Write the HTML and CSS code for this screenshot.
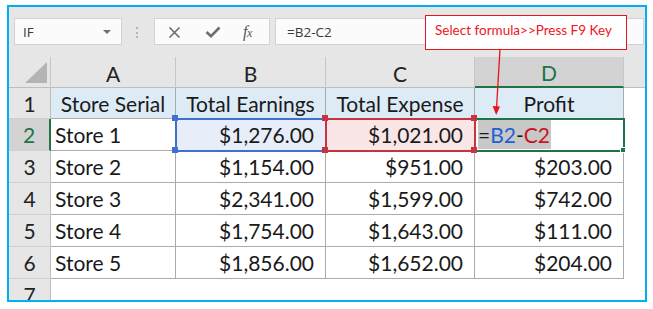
FILE: index.html
```html
<!DOCTYPE html>
<html>
<head>
<meta charset="utf-8">
<link rel="stylesheet" href="styles.css">
</head>
<body>
<div class="frame">
  <div class="toolbar">
    <div class="namebox"><span class="nb-text">IF</span><span class="caret"></span></div>
    <div class="grip"></div>
    <div class="fbtns">
      <svg class="ico-x" width="13" height="11" viewBox="0 0 13 11"><path d="M1.5 0.5 L11.5 10.5 M11.5 0.5 L1.5 10.5" stroke="#6e6e6e" stroke-width="1.6" fill="none"/></svg>
      <svg class="ico-ok" width="16" height="12" viewBox="0 0 16 12"><path d="M1.5 6 L6 10.2 L14.5 1.5" stroke="#6e6e6e" stroke-width="2.6" fill="none"/></svg>
      <span class="fx">f<span class="fx-x">x</span></span>
    </div>
    <div class="finput">=B2-C2</div>
  </div>

  <div class="sheet">
    <div class="ch corner"><span class="tri"></span></div>
    <div class="ch">A</div>
    <div class="ch">B</div>
    <div class="ch">C</div>
    <div class="ch ch-act">D</div>
    <div class="ch ch-ex"></div>

    <div class="rh">1</div>
    <div class="c hd">Store Serial</div>
    <div class="c hd">Total Earnings</div>
    <div class="c hd">Total Expense</div>
    <div class="c hd">Profit</div>
    <div class="ex"></div>

    <div class="rh rh-act">2</div>
    <div class="c txt">Store 1</div>
    <div class="c num ref-b">$1,276.00<span class="h tl"></span><span class="h tr"></span><span class="h bl"></span><span class="h br"></span></div>
    <div class="c num ref-c">$1,021.00<span class="h tl"></span><span class="h tr"></span><span class="h bl"></span><span class="h br"></span></div>
    <div class="c act"><span class="sel">=<span class="fb">B2</span>-<span class="fc">C2</span></span><span class="fill"></span></div>
    <div class="ex"></div>

    <div class="rh">3</div>
    <div class="c txt">Store 2</div>
    <div class="c num">$1,154.00</div>
    <div class="c num">$951.00</div>
    <div class="c num">$203.00</div>
    <div class="ex"></div>

    <div class="rh">4</div>
    <div class="c txt">Store 3</div>
    <div class="c num">$2,341.00</div>
    <div class="c num">$1,599.00</div>
    <div class="c num">$742.00</div>
    <div class="ex"></div>

    <div class="rh">5</div>
    <div class="c txt">Store 4</div>
    <div class="c num">$1,754.00</div>
    <div class="c num">$1,643.00</div>
    <div class="c num">$111.00</div>
    <div class="ex"></div>

    <div class="rh">6</div>
    <div class="c txt">Store 5</div>
    <div class="c num">$1,856.00</div>
    <div class="c num">$1,652.00</div>
    <div class="c num">$204.00</div>
    <div class="ex"></div>

    <div class="rh">7</div>
    <div class="ex"></div>
    <div class="ex"></div>
    <div class="ex"></div>
    <div class="ex"></div>
    <div class="ex"></div>
  </div>

  <div class="callout">Select formula&gt;&gt;Press F9 Key</div>
  <svg class="arrow" width="20" height="70" viewBox="0 0 20 70">
    <path d="M13 0 L9.6 58" stroke="#e8141b" stroke-width="1.3" fill="none"/>
    <path d="M5.6 57 L9.2 66 L13 57.4 Z" fill="#e8141b"/>
  </svg>
</div>
</body>
</html>
```

FILE: styles.css
```css
* { box-sizing: border-box; }

html, body {
  margin: 0;
  padding: 0;
  background: #ffffff;
}

.frame {
  position: relative;
  margin: 5px 0 0 7px;
  width: 640px;
  height: 297px;
  border: 2px solid #00b0f0;
  background: #e6e6e6;
  overflow: hidden;
  font-family: Lato, "Liberation Sans", sans-serif;
}

/* ---------- toolbar ---------- */
.toolbar {
  display: flex;
  align-items: flex-start;
  height: 50px;
  padding: 11px 0 0 5px;
}

.namebox {
  position: relative;
  display: flex;
  align-items: center;
  width: 108px;
  height: 27px;
  background: #fbfbfb;
  border: 1px solid #d2d2d2;
  padding-left: 8px;
  font-family: "Open Sans", "Noto Sans", sans-serif;
  font-size: 13.5px;
  color: #3a3a3a;
}

.caret {
  position: absolute;
  right: 10px;
  top: 11px;
  width: 0;
  height: 0;
  border-left: 4px solid transparent;
  border-right: 4px solid transparent;
  border-top: 4px solid #707070;
}

.grip {
  margin: 9px 0 0 14px;
  width: 2px;
  height: 11px;
  border-left: 2px dotted #b4b4b4;
}

.fbtns {
  display: flex;
  align-items: center;
  margin-left: 16px;
  width: 116px;
  height: 27px;
  background: #fbfbfb;
  border: 1px solid #d2d2d2;
  padding-left: 13px;
}

.ico-x { margin-top: 1px; }
.ico-ok { margin-left: 24px; margin-top: 1px; }

.fx {
  margin-left: 22px;
  font-family: "Liberation Serif", "DejaVu Serif", serif;
  font-style: italic;
  font-size: 16px;
  color: #555555;
  letter-spacing: -0.5px;
}
.fx-x { font-size: 12px; }

.finput {
  flex: 1;
  display: flex;
  align-items: center;
  margin-left: 5px;
  margin-right: 1px;
  height: 27px;
  background: #fbfbfb;
  border: 1px solid #d2d2d2;
  padding-left: 11px;
  font-family: "Open Sans", "Noto Sans", sans-serif;
  font-size: 13.5px;
  color: #3a3a3a;
}

/* ---------- sheet ---------- */
.sheet {
  display: grid;
  grid-template-columns: 42px 125px 150px 149px 149px 1fr;
  grid-template-rows: 31px 31px repeat(6, 32px);
  font-size: 21px;
  color: #1a1a1a;
}

.sheet > div {
  display: flex;
  align-items: center;
  white-space: nowrap;
}

.ch {
  justify-content: center;
  background: #e6e6e6;
  border-right: 1px solid #c6c6c6;
  border-bottom: 1px solid #bdbdbd;
  color: #222222;
  padding-top: 2px;
}

.corner {
  position: relative;
  border-right: 1px solid #c6c6c6;
}

.tri {
  position: absolute;
  left: 16px;
  top: 5px;
  width: 0;
  height: 0;
  border-left: 22px solid transparent;
  border-bottom: 21px solid #b4b4b4;
}

.ch-act {
  background: #d3d3d3;
  color: #217346;
  border-bottom: 2px solid #217346;
}

.ch-ex {
  border-right: none;
  background: #e6e6e6;
}

.rh {
  justify-content: center;
  background: #e6e6e6;
  border-right: 1px solid #bdbdbd;
  border-bottom: 1px solid #d0d0d0;
  color: #222222;
}

.rh-act {
  background: #d3d3d3;
  color: #217346;
  border-right: 2px solid #217346;
}

.c {
  position: relative;
  background: #ffffff;
  border-right: 1px solid #ababab;
  border-bottom: 1px solid #ababab;
}

.hd {
  justify-content: center;
  background: #ddebf7;
}

.txt {
  padding-left: 4px;
}

.num {
  justify-content: flex-end;
  padding-right: 11px;
}

.ex {
  background: #ffffff;
}

/* range references */
.ref-b {
  z-index: 1;
  background: #e7eef9;
  outline: 2px solid #3f6fcf;
  outline-offset: -1px;
}

.ref-c {
  z-index: 3;
  background: #fbe6e7;
  outline: 2px solid #c9333f;
  outline-offset: -1px;
}

.h {
  position: absolute;
  width: 6px;
  height: 6px;
}
.ref-b .h { background: #3f6fcf; }
.ref-c .h { background: #c9333f; }
.tl { left: -4px; top: -4px; }
.tr { right: -3px; top: -4px; }
.bl { left: -4px; bottom: -3px; }
.br { right: -3px; bottom: -3px; }

/* active cell */
.sheet > .act {
  z-index: 2;
  align-items: stretch;
  padding: 1px 0 1px 3px;
  outline: 2px solid #217346;
  outline-offset: -1px;
}

.sel {
  display: flex;
  align-items: center;
  background: #c8c8c8;
  padding-right: 1px;
}

.fb { color: #1f5fd6; }
.fc { color: #c8141e; }

.fill {
  position: absolute;
  right: -3px;
  bottom: -3px;
  width: 6px;
  height: 6px;
  background: #217346;
  border: 1px solid #ffffff;
}

/* ---------- annotation ---------- */
.callout {
  position: absolute;
  left: 416px;
  top: 8px;
  width: 202px;
  height: 35px;
  background: #ffffff;
  border: 1px solid #e8141b;
  padding: 6px 0 0 9px;
  font-size: 13.5px;
  color: #f0141c;
}

.arrow {
  position: absolute;
  left: 478px;
  top: 42px;
}
```
